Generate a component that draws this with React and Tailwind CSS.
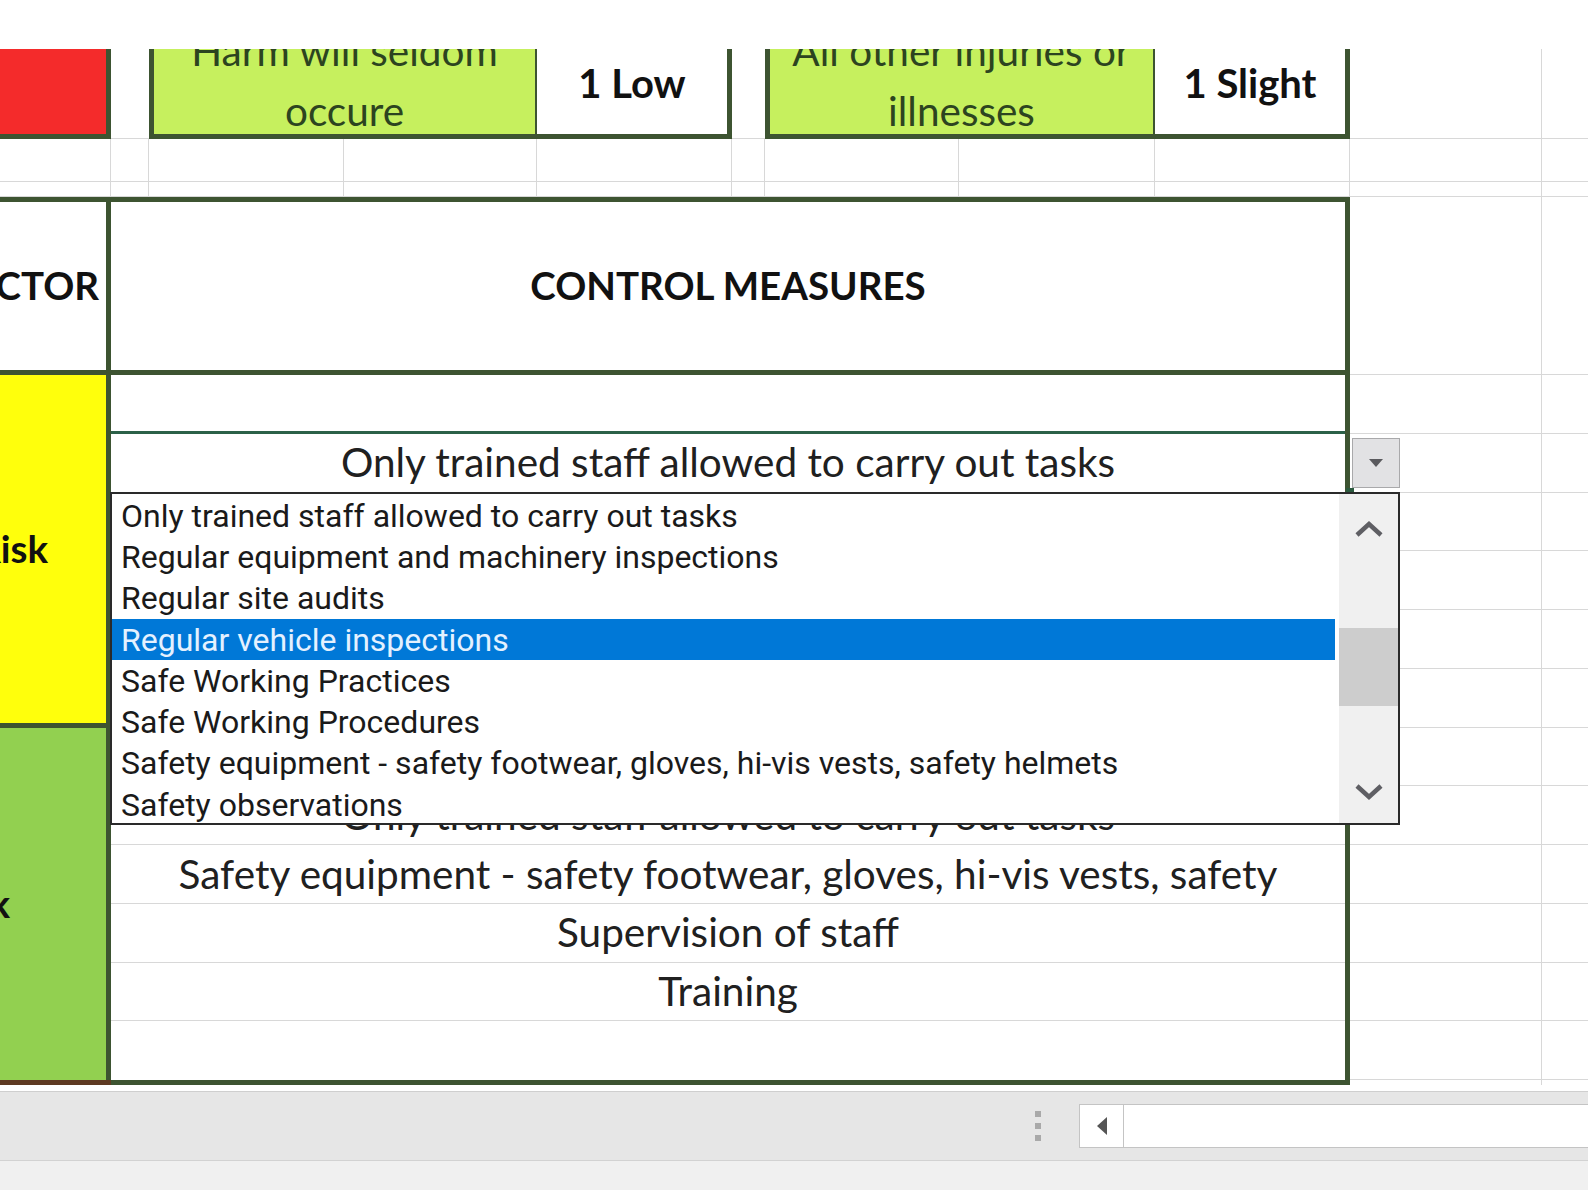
import React from "react";

const COLS =
  "grid grid-cols-[111px_38px_195px_193px_195px_33px_194px_196px_195px_192px_46px]";

function GridRow({ h }) {
  const cells = Array.from({ length: 11 });
  return (
    <div className={`${COLS} ${h}`}>
      {cells.map((_, i) => (
        <div
          key={i}
          className={`${i < 10 ? "border-r" : ""} border-b border-[#d8d8d8]`}
        />
      ))}
    </div>
  );
}

function RightRow({ h }) {
  return (
    <div className={`grid grid-cols-[192px_46px] shrink-0 ${h}`}>
      <div className="border-r border-b border-[#d8d8d8]" />
      <div className="border-b border-[#d8d8d8]" />
    </div>
  );
}

function Chevron({ up }) {
  return (
    <svg width="30" height="18" viewBox="0 0 30 18">
      <polyline
        points={up ? "3,15 15,4 27,15" : "3,3 15,14 27,3"}
        fill="none"
        stroke="#5f5f64"
        strokeWidth="4.5"
        strokeLinejoin="miter"
      />
    </svg>
  );
}

const rows = [
  "",
  "Only trained staff allowed to carry out tasks",
  "Regular equipment and machinery inspections",
  "Regular site audits",
  "Regular vehicle inspections",
  "Safe Working Practices",
  "Safe Working Procedures",
  "Only trained staff allowed to carry out tasks",
  "Safety equipment - safety footwear, gloves, hi-vis vests, safety",
  "Supervision of staff",
  "Training",
  "",
];

const items = [
  "Only trained staff allowed to carry out tasks",
  "Regular equipment and machinery inspections",
  "Regular site audits",
  "Regular vehicle inspections",
  "Safe Working Practices",
  "Safe Working Procedures",
  "Safety equipment - safety footwear, gloves, hi-vis vests, safety helmets",
  "Safety observations",
];

export default function App() {
  return (
    <div className="relative w-[1588px] h-[1200px] overflow-hidden bg-white font-['Lato',sans-serif] text-[#202020] flex flex-col">
      {/* top white band */}
      <div className="h-[49px] shrink-0 bg-white" />

      {/* row 1 */}
      <div className={`${COLS} h-[90px] shrink-0 overflow-hidden`}>
        <div className="bg-[#f42b2b] border-r-[5px] border-b-[5px] border-[#3d5431]" />
        <div className="border-b border-[#d8d8d8]" />
        <div className="col-span-2 bg-[#c6f05e] border-l-[5px] border-b-[5px] border-r-2 border-[#3d5431] overflow-hidden flex flex-col items-center text-[40.5px] leading-[60px] text-[#2c4420]">
          <div className="-mt-[28px] whitespace-nowrap">Harm will seldom</div>
          <div className="whitespace-nowrap">occure</div>
        </div>
        <div className="bg-white border-r-[5px] border-b-[5px] border-[#3d5431] flex items-center justify-center pb-[18px] font-bold text-[40px] text-[#111]">
          1 Low
        </div>
        <div className="border-b border-[#d8d8d8]" />
        <div className="col-span-2 bg-[#c6f05e] border-l-[5px] border-b-[5px] border-r-2 border-[#3d5431] overflow-hidden flex flex-col items-center text-[40.5px] leading-[60px] text-[#2c4420]">
          <div className="-mt-[28px] whitespace-nowrap">All other injuries or</div>
          <div className="whitespace-nowrap">illnesses</div>
        </div>
        <div className="bg-white border-r-[5px] border-b-[5px] border-[#3d5431] flex items-center justify-center pb-[18px] font-bold text-[40px] text-[#111]">
          1 Slight
        </div>
        <div className="border-r border-b border-[#d8d8d8]" />
        <div className="border-b border-[#d8d8d8]" />
      </div>

      {/* rows 2-3 */}
      <div className="shrink-0">
        <GridRow h="h-[43px]" />
        <GridRow h="h-[15px]" />
      </div>

      {/* main table */}
      <div className="flex h-[888px] shrink-0">
        <div className="w-[1350px] shrink-0 border-t-[5px] border-r-[5px] border-[#3d5431] flex flex-col">
          {/* header */}
          <div className="flex h-[173px] shrink-0 border-b-[5px] border-[#3d5431]">
            <div className="w-[111px] shrink-0 border-r-[5px] border-[#3d5431] overflow-hidden flex items-center justify-end pr-[7px]">
              <span className="shrink-0 whitespace-nowrap font-bold text-[38.5px] text-[#111]">
                RISK FACTOR
              </span>
            </div>
            <div className="flex-1 flex items-center justify-center font-bold text-[38.5px] text-[#111]">
              CONTROL MEASURES
            </div>
          </div>
          {/* body */}
          <div className="flex flex-1">
            <div className="w-[111px] shrink-0 flex flex-col border-b-[5px] border-[#5e3a22]">
              <div className="flex-1 flex border-r-[5px] border-[#3d5431] flex-col">
                <div className="h-[352.5px] shrink-0 bg-[#ffff0c] border-b-[5px] border-[#3d5431] overflow-hidden flex items-center justify-end pr-[58px]">
                  <span className="shrink-0 whitespace-nowrap font-bold text-[38.5px] text-[#111]">
                    Medium Risk
                  </span>
                </div>
                <div className="flex-1 bg-[#92d050] overflow-hidden flex items-center justify-end pr-[96px]">
                  <span className="shrink-0 whitespace-nowrap font-bold text-[38.5px] text-[#111]">
                    Low Risk
                  </span>
                </div>
              </div>
            </div>
            <div className="flex-1 flex flex-col border-b-[5px] border-[#3d5431]">
              {rows.map((t, i) => (
                <div
                  key={i}
                  className={`h-[58.75px] shrink-0 flex items-center justify-center text-[40.5px] whitespace-nowrap ${
                    i === 0
                      ? "border-b-[3px] border-[#2b6148]"
                      : i === 11
                      ? ""
                      : "border-b border-[#d8d8d8]"
                  }`}
                >
                  {t}
                </div>
              ))}
            </div>
          </div>
        </div>
        {/* right grid area */}
        <div className="flex-1 flex flex-col">
          <RightRow h="h-[178px]" />
          {rows.map((_, i) => (
            <RightRow key={i} h="h-[58.75px]" />
          ))}
          <div className="grid grid-cols-[192px_46px] flex-1">
            <div className="border-r border-[#d8d8d8]" />
            <div />
          </div>
        </div>
      </div>

      {/* bottom chrome */}
      <div className="h-[7px] shrink-0 bg-white border-b border-[#cfcfcf]" />
      <div className="h-[68px] shrink-0 bg-[#e6e6e6] flex items-center pl-[1035px]">
        <div className="flex flex-col gap-[6px] w-[6px]">
          <div className="h-[6px] bg-[#a9a9a9]" />
          <div className="h-[6px] bg-[#a9a9a9]" />
          <div className="h-[6px] bg-[#a9a9a9]" />
        </div>
        <div className="ml-[38px] w-[45px] h-[44px] bg-white border border-[#c4c4c4] flex items-center justify-center">
          <svg width="12" height="20" viewBox="0 0 12 20">
            <polygon points="11,1 11,19 1,10" fill="#555" />
          </svg>
        </div>
        <div className="flex-1 h-[44px] bg-white border-y border-[#c4c4c4]" />
      </div>
      <div className="h-px shrink-0 bg-[#d2d2d2]" />
      <div className="h-[29px] shrink-0 bg-[#f0f0f0]" />
      <div className="flex-1 bg-white" />

      {/* selection fill handle */}
      <div className="absolute left-[1346px] top-[488px] w-[8px] h-[8px] bg-[#2b5a3e]" />

      {/* dropdown button */}
      <div className="absolute left-[1352px] top-[438px] w-[48px] h-[50px] bg-[#e2e2e4] border border-[#a9a9ab] flex items-center justify-center">
        <svg width="14" height="8" viewBox="0 0 14 8">
          <polygon points="0,0 14,0 7,8" fill="#5a5a5e" />
        </svg>
      </div>

      {/* dropdown list */}
      <div className="absolute left-[110px] top-[492px] w-[1290px] h-[333px] border-2 border-[#2a2a2a] bg-white flex font-['Roboto',sans-serif]">
        <div className="flex-1 mr-[4px] pt-[1px] flex flex-col">
          {items.map((t, i) => (
            <div
              key={i}
              className={`h-[41.3px] shrink-0 flex items-center pl-[9px] text-[32px] whitespace-nowrap ${
                i === 3 ? "bg-[#0078d7] text-[#e4f1ff]" : "text-[#1a1a1a]"
              }`}
            >
              {t}
            </div>
          ))}
        </div>
        <div className="w-[59px] bg-[#f0f0f0] flex flex-col">
          <div className="h-[70px] flex items-center justify-center">
            <Chevron up />
          </div>
          <div className="h-[64px]" />
          <div className="h-[78px] bg-[#cdcdcd]" />
          <div className="flex-1" />
          <div className="h-[62px] flex items-center justify-center">
            <Chevron />
          </div>
        </div>
      </div>
    </div>
  );
}
